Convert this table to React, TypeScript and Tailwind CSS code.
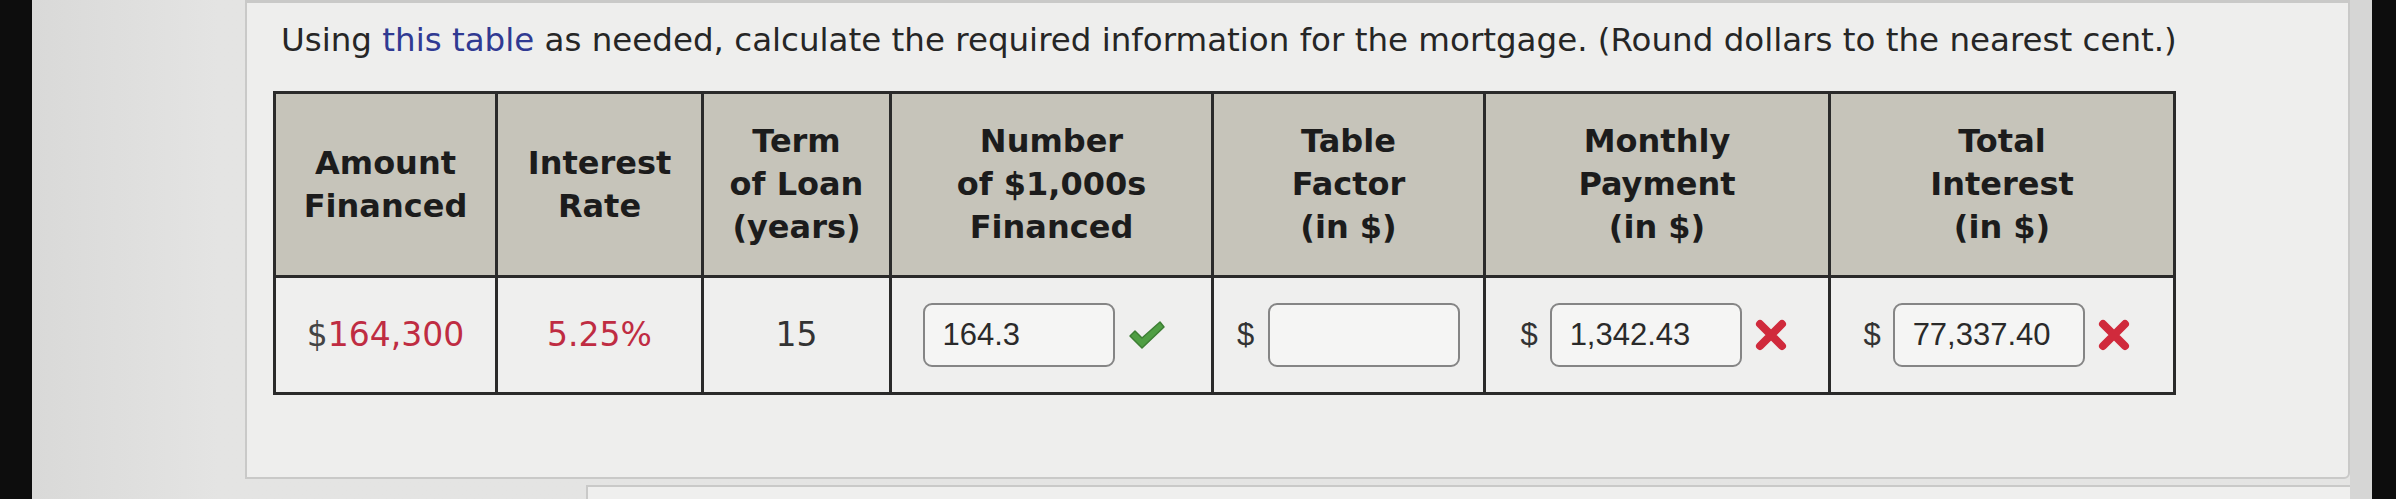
import React from "react";

const head = ["Amount\nFinanced", "Interest\nRate", "Term\nof Loan\n(years)", "Number\nof $1,000s\nFinanced", "Table\nFactor\n(in $)", "Monthly\nPayment\n(in $)", "Total\nInterest\n(in $)"];
const widths = ["w-[222px]", "w-[206px]", "w-[188px]", "w-[322px]", "w-[272px]", "w-[345px]", "w-[345px]"];

function Check() {
  return (
    <svg width="40" height="32" viewBox="0 0 40 32" className="shrink-0">
      <path d="M3 17 L8 12 L15 19 L33 3 L37 8 L15 29 Z" fill="#4f9e43" stroke="#3d7f34" strokeWidth="1.5" strokeLinejoin="round" />
    </svg>
  );
}

function Cross() {
  return (
    <svg width="34" height="34" viewBox="0 0 34 34" className="shrink-0">
      <path d="M6 6 L28 28 M28 6 L6 28" stroke="#d02a3c" strokeWidth="8" strokeLinecap="round" />
    </svg>
  );
}

function Box({ value }: { value: string }) {
  return (
    <input
      readOnly
      defaultValue={value}
      className="w-[192px] h-[64px] border-2 border-[#858585] rounded-[9px] bg-[#f5f5f4] px-[18px] text-[31px] text-[#2a2a2a] outline-none"
      style={{ fontFamily: '"Liberation Sans", Arial, sans-serif' }}
    />
  );
}

function Dollar() {
  return <span className="text-[31px] text-[#333]" style={{ fontFamily: '"Liberation Sans", Arial, sans-serif' }}>$</span>;
}

export default function App() {
  return (
    <div className="w-[2396px] h-[499px] flex bg-[#e2e2e1] overflow-hidden" style={{ fontFamily: '"DejaVu Sans", Verdana, sans-serif' }}>
      <div className="w-[32px] bg-[#0d0d0d]" />
      <div className="flex-1 flex flex-col bg-gradient-to-r from-[#d9d9d8] to-[#e4e4e3] to-[8%]">
        <div className="ml-[213px] w-[2105px] h-[479px] border-2 border-t-[3px] border-[#c9c9c8] bg-[#eeeeed] rounded-br-[6px] pl-[34px] pt-[18px]">
          <p className="text-[32.5px] text-[#262626] leading-[38px] whitespace-nowrap">
            Using <span className="text-[#303a92]">this table</span> as needed, calculate the required information for the mortgage. (Round dollars to the nearest cent.)
          </p>
          <table className="mt-[32px] -ml-[8px] border-collapse border-[3px] border-[#2a2a2a]">
            <thead>
              <tr className="h-[184px] bg-[#c6c4ba]">
                {head.map((h, i) => (
                  <th key={i} className={`${widths[i]} border-[3px] border-[#2a2a2a] text-[32px] leading-[43px] font-bold text-[#1c1c1c] whitespace-pre-line align-middle`}>
                    {h}
                  </th>
                ))}
              </tr>
            </thead>
            <tbody>
              <tr className="h-[117px] bg-[#efefee]">
                <td className="border-[3px] border-[#2a2a2a] text-center text-[33px]">
                  <span className="text-[#444]">$</span>
                  <span className="text-[#bf2c42]">164,300</span>
                </td>
                <td className="border-[3px] border-[#2a2a2a] text-center text-[33px] text-[#bf2c42]">5.25%</td>
                <td className="border-[3px] border-[#2a2a2a] text-center text-[33px] text-[#333]">15</td>
                <td className="border-[3px] border-[#2a2a2a]">
                  <div className="flex items-center justify-center gap-[12px] pr-[14px]">
                    <Box value="164.3" />
                    <Check />
                  </div>
                </td>
                <td className="border-[3px] border-[#2a2a2a]">
                  <div className="flex items-center justify-center gap-[14px]">
                    <Dollar />
                    <Box value="" />
                  </div>
                </td>
                <td className="border-[3px] border-[#2a2a2a]">
                  <div className="flex items-center justify-center gap-[12px] pr-[6px]">
                    <Dollar />
                    <Box value="1,342.43" />
                    <Cross />
                  </div>
                </td>
                <td className="border-[3px] border-[#2a2a2a]">
                  <div className="flex items-center justify-center gap-[12px] pr-[10px]">
                    <Dollar />
                    <Box value="77,337.40" />
                    <Cross />
                  </div>
                </td>
              </tr>
            </tbody>
          </table>
        </div>
        <div className="mt-[6px] ml-[554px] flex-1 border-l-2 border-t-2 border-[#c9c9c8] bg-[#efefee]" />
      </div>
      <div className="w-[22px] bg-[#d6d6d5]" />
      <div className="w-[24px] bg-[#0d0d0d]" />
    </div>
  );
}
